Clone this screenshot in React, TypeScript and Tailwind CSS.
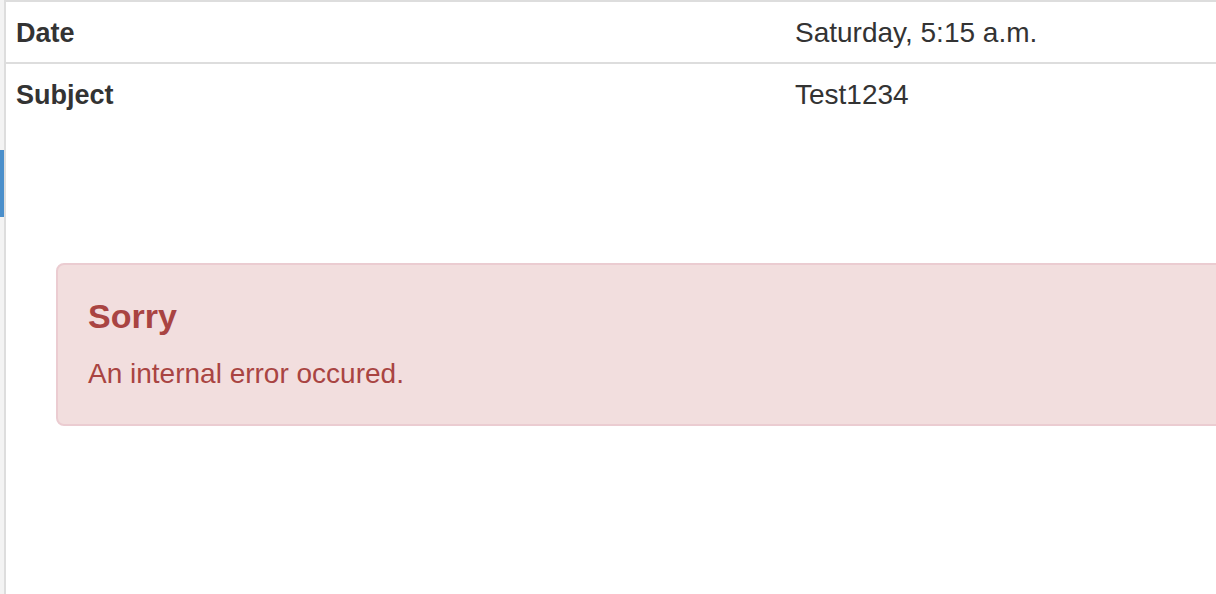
const rows = [
  { label: "Date", value: "Saturday, 5:15 a.m." },
  { label: "Subject", value: "Test1234" },
];

export default function App() {
  return (
    <div className="flex h-[594px] w-[1216px] overflow-hidden bg-white font-['Liberation_Sans',Arial,sans-serif] text-[#333333]">
      <aside className="w-[4px] shrink-0 bg-[#f3f3f3]">
        <div className="mt-[150px] h-[67px] bg-[#4a8fcb]" />
      </aside>
      <main className="min-w-0 flex-1 overflow-hidden border-l-2 border-[#dddddd]">
        <table className="w-[1300px] border-collapse leading-[40px]">
          <tbody>
            {rows.map((row, i) => (
              <tr
                key={row.label}
                className={i === 0 ? "border-t-2 border-b-2 border-[#dddddd]" : ""}
              >
                <th className="w-[779px] px-[10px] pt-[11px] pb-[9px] text-left text-[27px] font-bold">
                  {row.label}
                </th>
                <td className="px-[10px] pt-[11px] pb-[9px] text-[28px]">{row.value}</td>
              </tr>
            ))}
          </tbody>
        </table>

        <div className="-mr-[40px] mt-[139px] ml-[50px] rounded-[8px] border-2 border-[#ebccd1] bg-[#f2dede] px-[30px] pt-[32px] pb-[30px] text-[#a94442]">
          <h4 className="mb-[19px] text-[34px] font-bold leading-[38px]">Sorry</h4>
          <p className="text-[28px] leading-[40px]">An internal error occured.</p>
        </div>
      </main>
    </div>
  );
}
